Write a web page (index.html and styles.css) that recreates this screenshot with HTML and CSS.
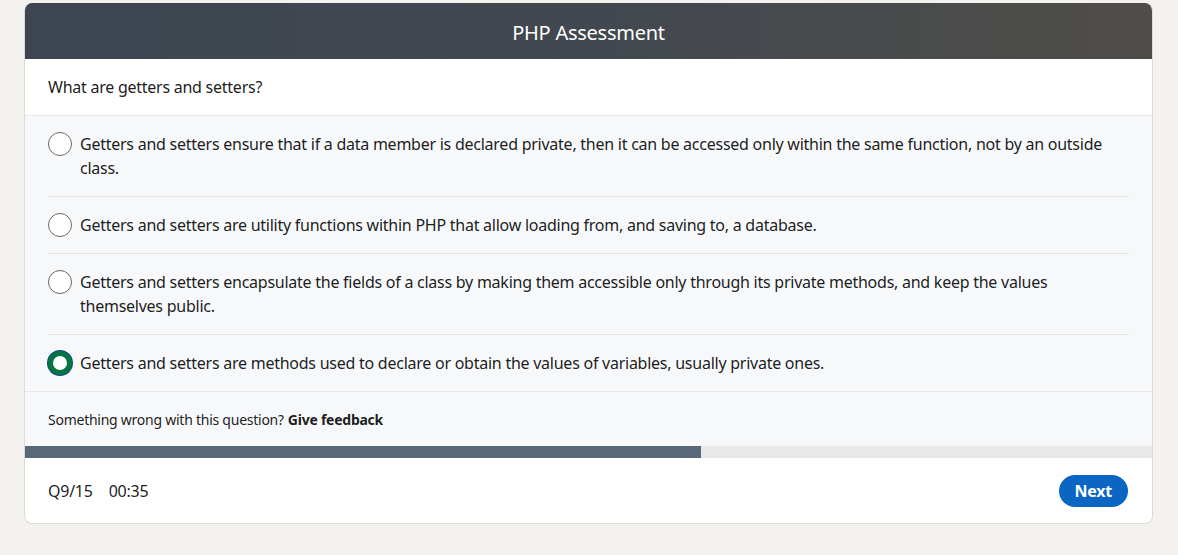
FILE: index.html
```html
<!DOCTYPE html>
<html lang="en">
<head>
<meta charset="utf-8">
<title>PHP Assessment</title>
<link rel="stylesheet" href="styles.css">
</head>
<body>
<div class="card">
  <header class="card-header">PHP Assessment</header>
  <div class="question">What are getters and setters?</div>
  <div class="options">
    <label class="option">
      <span class="radio"></span>
      <span class="option-text">Getters and setters ensure that if a data member is declared private, then it can be accessed only within the same function, not by an outside class.</span>
    </label>
    <label class="option">
      <span class="radio"></span>
      <span class="option-text">Getters and setters are utility functions within PHP that allow loading from, and saving to, a database.</span>
    </label>
    <label class="option">
      <span class="radio"></span>
      <span class="option-text">Getters and setters encapsulate the fields of a class by making them accessible only through its private methods, and keep the values themselves public.</span>
    </label>
    <label class="option">
      <span class="radio selected"></span>
      <span class="option-text">Getters and setters are methods used to declare or obtain the values of variables, usually private ones.</span>
    </label>
  </div>
  <div class="feedback">Something wrong with this question? <b>Give feedback</b></div>
  <div class="progress"><div class="progress-fill" style="width:60%"></div></div>
  <footer class="card-footer">
    <div class="status"><span>Q9/15</span><span>00:35</span></div>
    <button class="next">Next</button>
  </footer>
</div>
</body>
</html>
```
FILE: styles.css
```css
* { box-sizing: border-box; }
html, body { margin: 0; }
body {
  background: #f3f2ef;
  font-family: "Noto Sans", "Open Sans", sans-serif;
  letter-spacing: -0.25px;
  color: rgba(0,0,0,0.9);
  padding: 3px 25px 0 24px;
}
.card {
  background: #fff;
  border: 1px solid #dcdbd8;
  border-top: none;
  border-radius: 8px;
  overflow: hidden;
}
.card-header {
  height: 56px;
  padding-top: 3px;
  margin: 0 -1px;
  background: linear-gradient(90deg, #3c4550 0%, #424850 50%, #4f4d48 100%);
  color: #fff;
  font-size: 20px;
  display: flex;
  align-items: center;
  justify-content: center;
}
.question {
  height: 57px;
  padding: 0 23px;
  display: flex;
  align-items: center;
  font-size: 16px;
  border-bottom: 1px solid #e8e8e8;
}
.options {
  background: #f7f8fa;
  border-bottom: 1px solid #e8e8e8;
}
.option {
  display: flex;
  align-items: flex-start;
  gap: 8px;
  margin: 0 23px;
  padding: 16px 0;
  border-bottom: 1px solid #e3e3e3;
  font-size: 16px;
  line-height: 24px;
}
.option:last-child { border-bottom: none; }
.option-text { padding-right: 8px; }
.radio {
  flex: none;
  width: 24px;
  height: 24px;
  border-radius: 50%;
  border: 1px solid #666;
  background: #fff;
}
.radio.selected {
  border: 5px solid #057642;
  box-shadow: 0 0 0 1px #0a4a8a;
}
.feedback {
  background: #f7f8fa;
  height: 54px;
  padding: 0 23px;
  display: flex;
  align-items: center;
  font-size: 14px;
}
.feedback b { margin-left: 4px; }
.progress {
  height: 12px;
  background: #e8e8e8;
}
.progress-fill {
  height: 100%;
  background: #56687a;
}
.card-footer {
  height: 65px;
  padding: 0 24px 0 23px;
  display: flex;
  align-items: center;
  justify-content: space-between;
}
.status { display: flex; gap: 16px; font-size: 16px; }
.next {
  height: 32px;
  padding: 0 16px;
  border: none;
  border-radius: 16px;
  background: #0a66c2;
  color: #fff;
  font-family: inherit;
  letter-spacing: inherit;
  font-size: 16px;
  font-weight: 700;
}
```
